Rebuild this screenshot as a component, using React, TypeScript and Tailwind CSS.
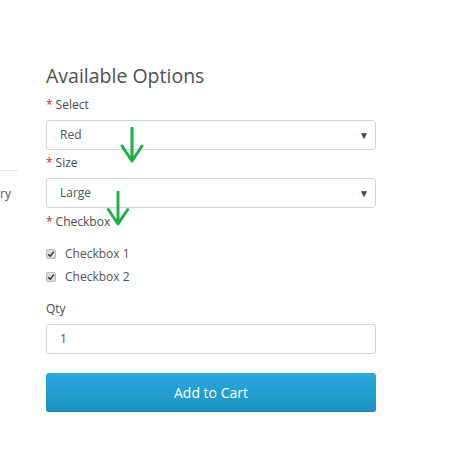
import React from "react";

function Label({ text, required }: { text: string; required?: boolean }) {
  return (
    <div className="h-4 text-[12px] leading-4 text-[#4a4a4a]">
      {required && <span className="text-[#e02020] mr-[3px]">*</span>}
      {text}
    </div>
  );
}

function SelectBox({ value }: { value: string }) {
  return (
    <div className="h-[30px] w-[330px] rounded-[3px] border border-[#d4d4d4] flex items-center justify-between pl-[13px] pr-[6px] text-[12px] text-[#555]">
      <span>{value}</span>
      <span className="text-[10px] text-[#444]">▼</span>
    </div>
  );
}

function Check({ text }: { text: string }) {
  return (
    <div className="h-5 flex items-center text-[12px] text-[#555]">
      <span className="w-[10px] h-[10px] rounded-[2px] bg-[#dcdcdc] border border-[#bbb] flex items-center justify-center mr-[9px]">
        <svg viewBox="0 0 10 10" className="w-[8px] h-[8px]">
          <path d="M1.5 5.2 L4 7.6 L8.5 2" fill="none" stroke="#333" strokeWidth="1.8" />
        </svg>
      </span>
      {text}
    </div>
  );
}

function GreenArrow({ className }: { className: string }) {
  return (
    <svg viewBox="0 0 24 36" className={className}>
      <path d="M12 1 L12 34 M2 19 L12 34 L22 19" fill="none" stroke="#22ad45" strokeWidth="3" strokeLinecap="round" strokeLinejoin="round" />
    </svg>
  );
}

export default function App() {
  return (
    <div className="relative w-[474px] h-[474px] overflow-hidden bg-white" style={{ fontFamily: '"Open Sans", "Noto Sans", sans-serif' }}>
      <div className="flex">
        {/* cut-off sidebar */}
        <div className="w-[18px] pt-[170px]">
          <div className="border-t border-[#e2e2e2]" />
          <div className="mt-[15px] text-[12px] leading-4 text-[#555]">ry</div>
        </div>

        {/* options */}
        <div className="ml-[28px] pt-[62px]">
          <h2 className="text-[19.5px] leading-7 text-[#505050]">Available Options</h2>
          <div className="mt-[7px]">
            <Label text="Select" required />
          </div>
          <div className="mt-[7px]">
            <SelectBox value="Red" />
          </div>
          <div className="mt-[5px]">
            <Label text="Size" required />
          </div>
          <div className="mt-[7px]">
            <SelectBox value="Large" />
          </div>
          <div className="mt-[6px]">
            <Label text="Checkbox" required />
          </div>
          <div className="mt-[14px] flex flex-col gap-[3px]">
            <Check text="Checkbox 1" />
            <Check text="Checkbox 2" />
          </div>
          <div className="mt-[14px]">
            <Label text="Qty" />
          </div>
          <div className="mt-[7px] h-[30px] w-[330px] rounded-[3px] border border-[#d4d4d4] flex items-center pl-[13px] text-[12px] text-[#555]">
            1
          </div>
          <button className="mt-[19px] h-[39px] w-[330px] rounded-[3px] bg-gradient-to-b from-[#2aa9dd] to-[#1e92c4] border-b border-[#1a82b0] text-white text-[14px] flex items-center justify-center">
            Add to Cart
          </button>
        </div>
      </div>

      {/* annotation arrows */}
      <GreenArrow className="absolute left-[120px] top-[127px] w-[24px] h-[36px]" />
      <GreenArrow className="absolute left-[106px] top-[191px] w-[24px] h-[35px]" />
    </div>
  );
}
